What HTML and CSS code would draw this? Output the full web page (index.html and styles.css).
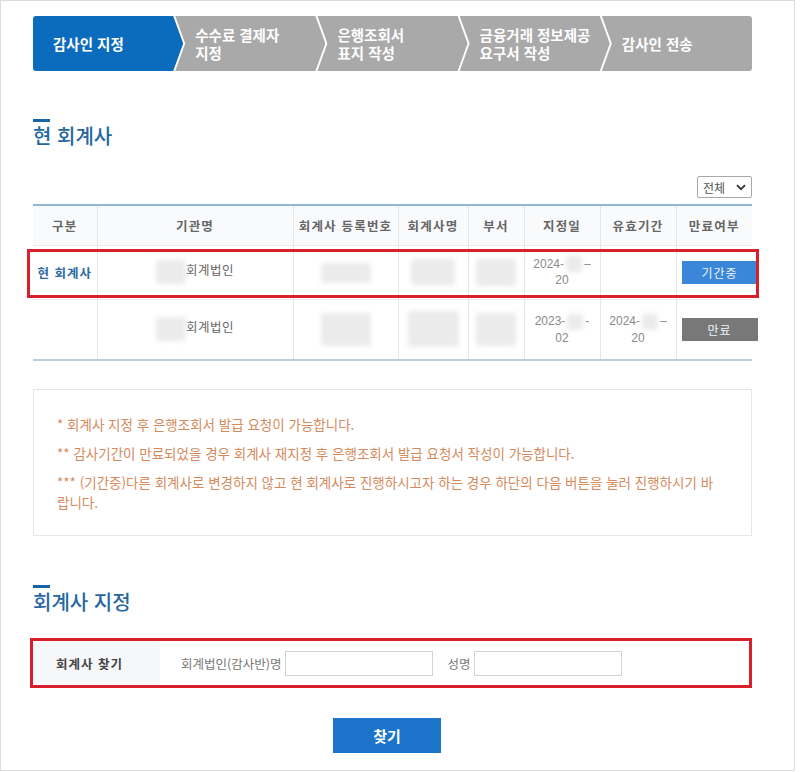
FILE: index.html
```html
<!DOCTYPE html>
<html lang="ko">
<head>
<meta charset="utf-8">
<title>감사인 지정</title>
<link rel="stylesheet" href="styles.css">
</head>
<body>
<div class="frame">
  <div class="content">
    <ol class="steps">
      <li class="step step-active"><span>감사인 지정</span></li>
      <li class="step"><span>수수료 결제자<br>지정</span></li>
      <li class="step"><span>은행조회서<br>표지 작성</span></li>
      <li class="step"><span>금융거래 정보제공<br>요구서 작성</span></li>
      <li class="step"><span>감사인 전송</span></li>
    </ol>

    <h2 class="sec-title sec-title-first">현 회계사</h2>

    <div class="filter">
      <div class="select">
        <span>전체</span>
        <svg class="chev" width="10" height="7" viewBox="0 0 10 7"><path d="M1 1.2 L5 5.2 L9 1.2" fill="none" stroke="#333" stroke-width="1.8"/></svg>
      </div>
    </div>

    <div class="table-wrap">
      <table class="grid">
        <colgroup>
          <col class="c1"><col class="c2"><col class="c3"><col class="c4"><col class="c5"><col class="c6"><col class="c7"><col class="c8">
        </colgroup>
        <thead>
          <tr>
            <th>구분</th><th>기관명</th><th>회계사 등록번호</th><th>회계사명</th><th>부서</th><th>지정일</th><th>유효기간</th><th>만료여부</th>
          </tr>
        </thead>
        <tbody>
          <tr class="row-a">
            <td class="cur">현 회계사</td>
            <td class="org"><span class="blur b-org"></span>회계법인</td>
            <td><span class="blur b-reg1"></span></td>
            <td><span class="blur b-name1"></span></td>
            <td><span class="blur b-dept1"></span></td>
            <td class="date">2024-<span class="blur b-date"></span>–<br>20</td>
            <td class="date"></td>
            <td class="state"><span class="badge badge-on">기간중</span></td>
          </tr>
          <tr class="row-b">
            <td></td>
            <td class="org"><span class="blur b-org"></span>회계법인</td>
            <td><span class="blur b-reg2"></span></td>
            <td><span class="blur b-name2"></span></td>
            <td><span class="blur b-dept2"></span></td>
            <td class="date">2023-<span class="blur b-date"></span>-<br>02</td>
            <td class="date">2024-<span class="blur b-date"></span>–<br>20</td>
            <td class="state"><span class="badge badge-off">만료</span></td>
          </tr>
        </tbody>
      </table>
      <div class="mark mark-row"></div>
    </div>

    <div class="notice">
      <p>* 회계사 지정 후 은행조회서 발급 요청이 가능합니다.</p>
      <p>** 감사기간이 만료되었을 경우 회계사 재지정 후 은행조회서 발급 요청서 작성이 가능합니다.</p>
      <p>*** (기간중)다른 회계사로 변경하지 않고 현 회계사로 진행하시고자 하는 경우 하단의 다음 버튼을 눌러 진행하시기 바랍니다.</p>
    </div>

    <h2 class="sec-title sec-title-second">회계사 지정</h2>

    <div class="form-wrap">
      <div class="form-row">
        <div class="form-label">회계사 찾기</div>
        <label class="field-label field-label-first">회계법인(감사반)명</label>
        <input class="field" type="text">
        <label class="field-label field-label-second">성명</label>
        <input class="field" type="text">
      </div>
      <div class="mark mark-form"></div>
    </div>

    <div class="actions">
      <button class="btn-search" type="button">찾기</button>
    </div>
  </div>
</div>
</body>
</html>
```

FILE: styles.css
```css
* { box-sizing: border-box; }

body {
  margin: 0;
  background: #fff;
  font-family: "Noto Sans CJK KR", "Noto Sans", sans-serif;
}

.frame {
  width: 795px;
  height: 771px;
  border: 1px solid #dcdcdc;
  padding: 15px 0 0 32px;
  overflow: hidden;
}

.content { width: 719px; }

/* stepper */
.steps {
  list-style: none;
  margin: 0;
  padding: 0;
  display: flex;
  height: 55px;
}

.step {
  flex: 1 1 0;
  margin-left: -8px;
  background: #a9a9a9;
  color: #fff;
  font-size: 14.5px;
  font-weight: 700;
  line-height: 18px;
  display: flex;
  align-items: center;
  padding-left: 20px;
  clip-path: polygon(0 0, calc(100% - 10px) 0, 100% 50%, calc(100% - 10px) 100%, 0 100%, 10px 50%);
}

.step:first-child {
  margin-left: 0;
  clip-path: polygon(0 0, calc(100% - 10px) 0, 100% 50%, calc(100% - 10px) 100%, 0 100%);
  border-radius: 3px 0 0 3px;
}

.step:last-child {
  clip-path: polygon(0 0, 100% 0, 100% 100%, 0 100%, 10px 50%);
  border-radius: 0 3px 3px 0;
}

.step-active { background: #0b6bbd; }

/* section titles */
.sec-title {
  margin: 0;
  font-size: 20px;
  line-height: 24px;
  font-weight: 500;
  color: #26679f;
}

.sec-title::before {
  content: "";
  display: block;
  width: 17px;
  height: 3px;
  background: #1b64a3;
  margin-bottom: 2px;
}

.sec-title-first { margin-top: 48px; }
.sec-title-second { margin-top: 49px; }

/* filter select */
.filter {
  display: flex;
  justify-content: flex-end;
  margin-top: 28px;
}

.select {
  width: 55px;
  height: 22px;
  border: 1px solid #a8a8a8;
  border-radius: 2px;
  display: flex;
  align-items: center;
  justify-content: space-between;
  padding: 0 5px 0 5px;
  font-size: 12px;
  color: #555;
}

/* table */
.table-wrap {
  position: relative;
  margin-top: 6px;
}

.grid {
  width: 719px;
  table-layout: fixed;
  border-collapse: collapse;
  border-top: 2px solid #8fb7d6;
  border-bottom: 2px solid #b6cee0;
}

.c1 { width: 64px; }
.c2 { width: 196px; }
.c3 { width: 105px; }
.c4 { width: 70px; }
.c5 { width: 56px; }
.c6 { width: 76px; }
.c7 { width: 76px; }
.c8 { width: 76px; }

.grid th {
  height: 40px;
  background: #f9fafb;
  font-size: 12.5px;
  font-weight: 700;
  color: #666;
  letter-spacing: 1.2px;
  border-left: 1px solid #e4e6e8;
  border-bottom: 1px solid #e8eaec;
  padding: 0;
}

.grid td {
  text-align: center;
  font-size: 12.5px;
  color: #666;
  border-left: 1px solid #e4e6e8;
  border-bottom: 1px solid #e8eaec;
  padding: 0;
  vertical-align: middle;
}

.grid th:first-child,
.grid td:first-child { border-left: 0; }

.row-a { height: 54px; }
.row-b { height: 61px; }

.grid td.cur {
  color: #2a6ba4;
  font-weight: 700;
  letter-spacing: 1px;
}

.grid td.org { letter-spacing: 0.5px; }

.grid td.date {
  font-family: "Liberation Sans", Arial, sans-serif;
  font-size: 12px;
  line-height: 16px;
  color: #8a8a8a;
}

.grid td.state {
  text-align: left;
  padding-left: 5px;
}

.badge {
  display: block;
  width: 76px;
  height: 23px;
  line-height: 23px;
  text-align: center;
  font-size: 12px;
  letter-spacing: 1px;
  color: #eef3fb;
}

.badge-on { background: #3a87d9; }
.badge-off { background: #787878; }

.blur {
  display: inline-block;
  background: #ebebeb;
  filter: blur(2.5px);
  border-radius: 3px;
  vertical-align: middle;
}

.b-org { width: 30px; height: 24px; }
.b-reg1 { width: 50px; height: 20px; }
.b-reg2 { width: 50px; height: 33px; }
.b-name1 { width: 44px; height: 26px; }
.b-name2 { width: 51px; height: 36px; }
.b-dept1 { width: 40px; height: 27px; }
.b-dept2 { width: 40px; height: 33px; }
.b-date { width: 16px; height: 16px; margin: 0 2px; }

/* red annotation boxes */
.mark {
  position: absolute;
  border: 3px solid #d7202b;
  pointer-events: none;
}

.mark-row {
  left: -6px;
  top: 45px;
  width: 732px;
  height: 49px;
}

.mark-form {
  left: -3px;
  top: -3px;
  width: 722px;
  height: 50px;
}

/* notice */
.notice {
  margin-top: 28px;
  border: 1px solid #e6e6e6;
  padding: 24px 28px 23px 23px;
  font-size: 13.5px;
  line-height: 20px;
  color: #d58a5d;
}

.notice p { margin: 0 0 9px; }
.notice p:last-child { margin-bottom: 0; }

/* form */
.form-wrap {
  position: relative;
  margin-top: 27px;
}

.form-row {
  display: flex;
  align-items: center;
  height: 44px;
}

.form-label {
  width: 127px;
  height: 44px;
  background: #f5f7f9;
  display: flex;
  align-items: center;
  padding-left: 23px;
  font-size: 12.5px;
  font-weight: 700;
  color: #444;
  letter-spacing: 1px;
}

.field-label {
  font-size: 12.5px;
  color: #777;
  margin-right: 4px;
}

.field-label-first { margin-left: 21px; }
.field-label-second { margin-left: 14px; }

.field {
  width: 148px;
  height: 25px;
  border: 1px solid #d3d3d3;
  margin: 0;
  padding: 0 4px;
  font-size: 13px;
}

.actions {
  display: flex;
  justify-content: center;
  padding-right: 11px;
  margin-top: 33px;
}

.btn-search {
  width: 108px;
  height: 35px;
  border: 0;
  background: #1b74c9;
  color: #fff;
  font-family: inherit;
  font-size: 15px;
  font-weight: 700;
}
```
